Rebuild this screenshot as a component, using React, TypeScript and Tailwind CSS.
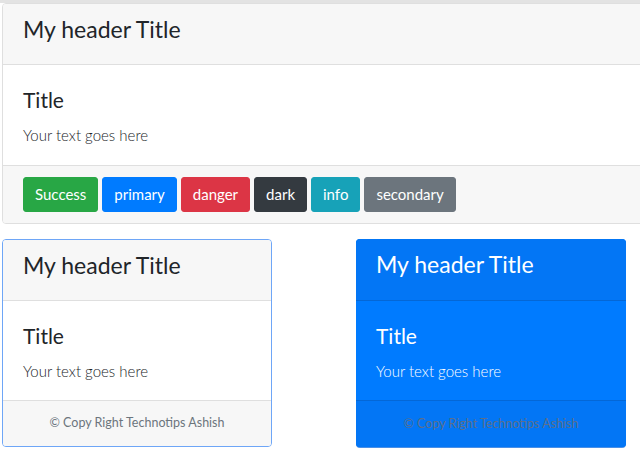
const buttons = [
  { label: "Success", cls: "bg-[#28a745] border-[#28a745]" },
  { label: "primary", cls: "bg-[#007bff] border-[#007bff]" },
  { label: "danger", cls: "bg-[#dc3545] border-[#dc3545]" },
  { label: "dark", cls: "bg-[#343a40] border-[#343a40]" },
  { label: "info", cls: "bg-[#17a2b8] border-[#17a2b8]" },
  { label: "secondary", cls: "bg-[#6c757d] border-[#6c757d]" },
];

const App = () => {
  return (
    <div className="min-h-[458px] bg-white font-['Lato','Segoe_UI',sans-serif] text-[#212529] border-t-[3px] border-[#e3e3e3] pl-[2px]">
      {/* top card, runs past the right edge */}
      <section className="w-[660px] border border-[#dfdfdf] rounded-[4px] overflow-hidden">
        <div className="h-[61px] bg-[#f7f7f7] border-b border-[#dfdfdf] flex items-center px-[20px] pb-[10px]">
          <h2 className="text-[23px] leading-none">My header Title</h2>
        </div>
        <div className="h-[100px] px-[20px] pt-[24px]">
          <h3 className="text-[21px] leading-none">Title</h3>
          <p className="text-[15px] mt-[14px] font-light">Your text goes here</p>
        </div>
        <div className="h-[58px] bg-[#f7f7f7] border-t border-[#dfdfdf] flex items-center gap-[4px] px-[20px]">
          {buttons.map((b) => (
            <button
              key={b.label}
              className={`h-[35px] px-[11px] rounded-[3px] border text-white text-[15px] ${b.cls}`}
            >
              {b.label}
            </button>
          ))}
        </div>
      </section>

      <div className="flex gap-[84px] mt-[15px]">
        <section className="w-[270px] h-[208px] border border-[#6ea6f7] rounded-[4px] overflow-hidden flex flex-col">
          <div className="h-[61px] bg-[#f7f7f7] border-b border-[#dfdfdf] flex items-center px-[20px] pb-[10px]">
            <h2 className="text-[23px] leading-none">My header Title</h2>
          </div>
          <div className="flex-1 px-[20px] pt-[24px]">
            <h3 className="text-[21px] leading-none">Title</h3>
            <p className="text-[15px] mt-[14px] font-light">Your text goes here</p>
          </div>
          <div className="h-[46px] bg-[#f7f7f7] border-t border-[#dfdfdf] flex items-center justify-center">
            <span className="text-[12.5px] text-[#6c757d]">© Copy Right Technotips Ashish</span>
          </div>
        </section>

        <section className="w-[270px] h-[208px] bg-[#007bff] text-white rounded-[4px] overflow-hidden flex flex-col shadow-[0_1px_0_#4a8fe6]">
          <div className="h-[62px] bg-[#0376f5] border-b border-[#0467d6] flex items-center px-[20px] pb-[10px]">
            <h2 className="text-[23px] leading-none">My header Title</h2>
          </div>
          <div className="flex-1 px-[20px] pt-[24px]">
            <h3 className="text-[21px] leading-none">Title</h3>
            <p className="text-[15px] mt-[14px] font-light">Your text goes here</p>
          </div>
          <div className="h-[47px] bg-[#0376f5] border-t border-[#0467d6] flex items-center justify-center">
            <span className="text-[12.5px] text-[#5c6f8a]">© Copy Right Technotips Ashish</span>
          </div>
        </section>
      </div>
    </div>
  );
};

export default App;
